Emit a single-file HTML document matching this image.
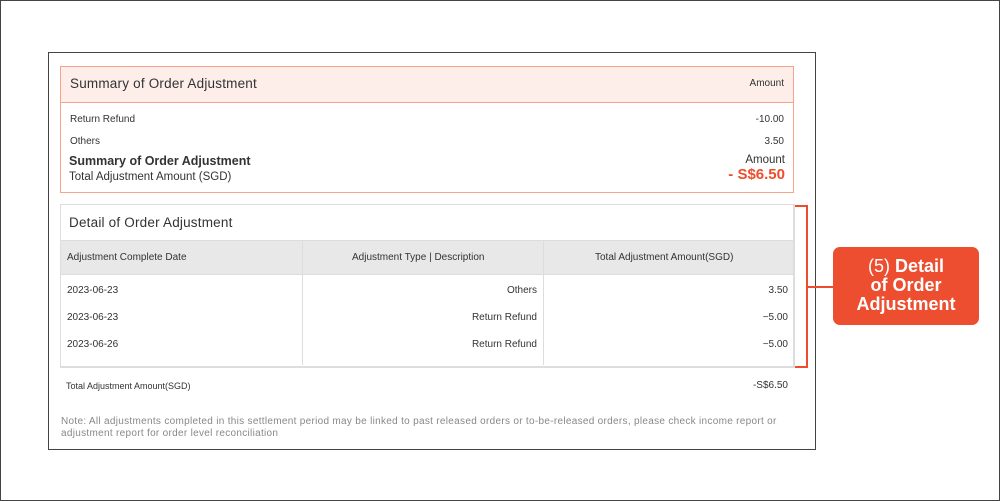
<!DOCTYPE html><html><head><style>
body{margin:0;width:1000px;height:501px;position:relative;background:#fff;font-family:"Liberation Sans",sans-serif;color:#333;overflow:hidden}
.a{position:absolute}
.t{position:absolute;white-space:nowrap}
</style></head><body>
<div class="a" style="left:0;top:0;width:998px;height:499px;border:1px solid #444"></div>
<div class="a" style="left:48px;top:52px;width:766px;height:396px;border:1px solid #444"></div>
<div class="a" style="left:60px;top:66px;width:732px;height:125px;border:1px solid #f4a58c"></div>
<div class="a" style="left:61px;top:67px;width:732px;height:35px;background:#fdeee9;border-bottom:1px solid #f4a58c"></div>
<div class="t" style="left:70px;top:76px;font-size:13.5px;letter-spacing:0.2px">Summary of Order Adjustment</div>
<div class="t" style="right:216px;top:78px;font-size:10px">Amount</div>
<div class="t" style="left:70px;top:114px;font-size:10px">Return Refund</div>
<div class="t" style="right:216px;top:114px;font-size:10px">-10.00</div>
<div class="t" style="left:70px;top:136px;font-size:10px">Others</div>
<div class="t" style="right:216px;top:136px;font-size:10px">3.50</div>
<div class="t" style="left:69px;top:154px;font-size:12.5px;font-weight:bold;color:#333">Summary of Order Adjustment</div>
<div class="t" style="right:215px;top:154px;font-size:11.5px">Amount</div>
<div class="t" style="left:69px;top:171px;font-size:11.5px">Total Adjustment Amount (SGD)</div>
<div class="t" style="right:215px;top:166px;font-size:15px;font-weight:bold;color:#ee4d2d">- S$6.50</div>
<div class="a" style="left:60px;top:204px;width:732px;height:161px;border:1px solid #ddd;border-width:1px 2px 2px 1px"></div>
<div class="t" style="left:69px;top:215px;font-size:13.5px;letter-spacing:0.2px">Detail of Order Adjustment</div>
<div class="a" style="left:61px;top:240px;width:732px;height:33px;background:#e8e8e8;border-top:1px solid #ddd;border-bottom:1px solid #ddd"></div>
<div class="a" style="left:302px;top:240px;width:1px;height:125px;background:#ddd"></div>
<div class="a" style="left:543px;top:240px;width:1px;height:125px;background:#ddd"></div>
<div class="t" style="left:67px;top:252px;font-size:10px">Adjustment Complete Date</div>
<div class="t" style="left:352px;top:252px;font-size:10px">Adjustment Type | Description</div>
<div class="t" style="left:595px;top:252px;font-size:10px">Total Adjustment Amount(SGD)</div>
<div class="t" style="left:67px;top:285px;font-size:10px">2023-06-23</div>
<div class="t" style="right:463px;top:285px;font-size:10px">Others</div>
<div class="t" style="right:212px;top:285px;font-size:10px">3.50</div>
<div class="t" style="left:67px;top:312px;font-size:10px">2023-06-23</div>
<div class="t" style="right:463px;top:312px;font-size:10px">Return Refund</div>
<div class="t" style="right:212px;top:312px;font-size:10px">−5.00</div>
<div class="t" style="left:67px;top:339px;font-size:10px">2023-06-26</div>
<div class="t" style="right:463px;top:339px;font-size:10px">Return Refund</div>
<div class="t" style="right:212px;top:339px;font-size:10px">−5.00</div>
<div class="t" style="left:66px;top:381px;font-size:9px">Total Adjustment Amount(SGD)</div>
<div class="t" style="right:212px;top:380px;font-size:10px">-S$6.50</div>
<div class="t" style="left:61px;top:416px;font-size:10px;letter-spacing:0.3px;color:#888;line-height:12px">Note: All adjustments completed in this settlement period may be linked to past released orders or to-be-released orders, please check income report or<br>adjustment report for order level reconciliation</div>
<div class="a" style="left:795px;top:205px;width:11px;height:159px;border:2px solid #ee4d2d;border-left:none"></div>
<div class="a" style="left:808px;top:286px;width:26px;height:2px;background:#ee4d2d"></div>
<div class="a" style="left:833px;top:247px;width:146px;height:78px;background:#ec4e2f;border-radius:7px;color:#fff;font-size:18px;font-weight:bold;text-align:center;line-height:19px;padding-top:10px;box-sizing:border-box"><span style="font-weight:normal">(5)</span> Detail<br>of Order<br>Adjustment</div>
</body></html>
